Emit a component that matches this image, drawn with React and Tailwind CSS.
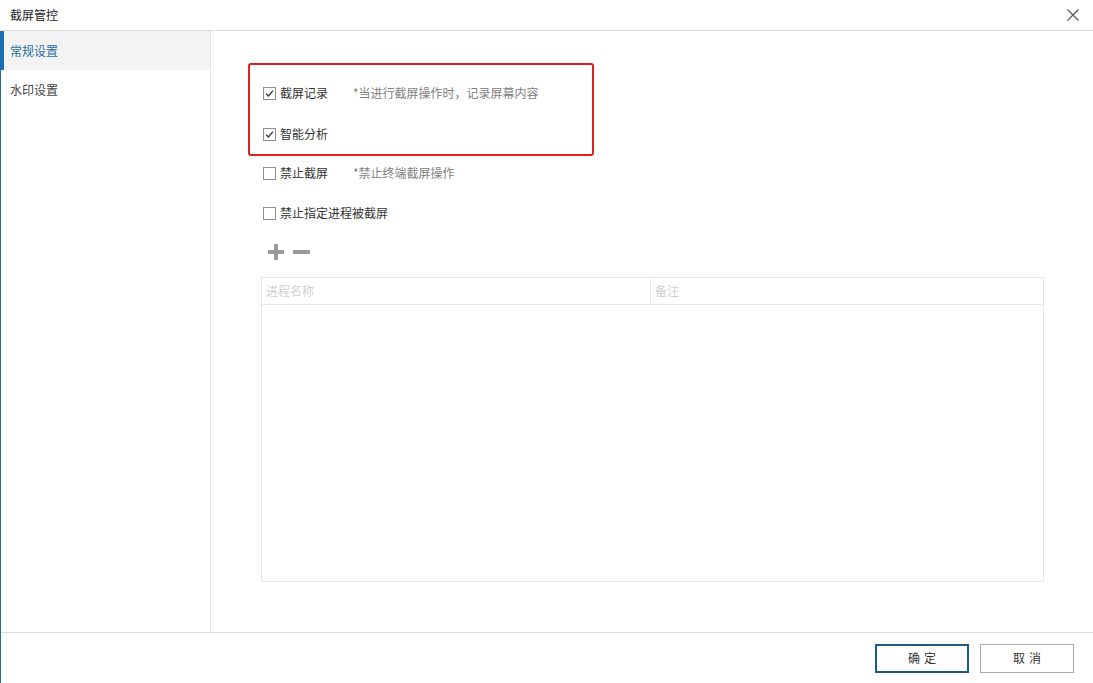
import React from 'react'

const font = { fontFamily: '"Microsoft YaHei", "Noto Sans CJK SC", "Noto Sans", sans-serif' }

const Checkbox = ({ checked }) => (
  <span className="w-[13px] h-[13px] border border-[#8f8f8f] bg-white flex items-center justify-center shrink-0">
    {checked && (
      <svg width="9" height="9" viewBox="0 0 9 9" fill="none">
        <path d="M1 4.6 L3.4 7 L8 1.6" stroke="#333" strokeWidth="1.3" />
      </svg>
    )}
  </span>
)

const Row = ({ checked, label, hint, className = '' }) => (
  <div className={`h-[20px] flex items-center ${className}`}>
    <Checkbox checked={checked} />
    <span className="ml-[4px] w-[73px] text-[12px] text-[#333] whitespace-nowrap">{label}</span>
    {hint && <span className="text-[12px] text-[#808080] whitespace-nowrap">{hint}</span>}
  </div>
)

export default function App() {
  return (
    <div className="w-[1093px] h-[683px] bg-white flex flex-col overflow-hidden" style={font}>
      {/* title bar */}
      <div className="h-[31px] shrink-0 flex items-center justify-between border-b border-[#dedede] pl-[10px] pr-[14px]">
        <span className="text-[12px] text-[#222]">截屏管控</span>
        <svg width="12" height="12" viewBox="0 0 12 12">
          <path d="M0.5 0.5 L11.5 11.5 M11.5 0.5 L0.5 11.5" stroke="#555" strokeWidth="1.2" />
        </svg>
      </div>

      <div className="flex-1 flex flex-col border-l border-[#2b6a92]">
        <div className="flex-1 flex">
          {/* sidebar */}
          <div className="w-[210px] shrink-0 border-r border-[#e2e2e2] flex flex-col">
            <div className="h-[39px] flex items-center bg-[#f3f3f3] relative -ml-px pl-[10px]">
              <span className="absolute left-0 top-0 bottom-0 w-[4px] bg-[#1b6db3]" />
              <span className="text-[12px] text-[#2a6ea6]">常规设置</span>
            </div>
            <div className="h-[39px] flex items-center pl-[9px]">
              <span className="text-[12px] text-[#444]">水印设置</span>
            </div>
          </div>

          {/* content */}
          <div className="flex-1 flex flex-col pl-[37px] pr-[49px] pt-[32px]">
            <div className="w-[346px] h-[93px] border-2 border-[#e0201e] rounded-[3px] pl-[13px] pt-[18px] flex flex-col gap-[21px]">
              <Row checked label="截屏记录" hint="*当进行截屏操作时，记录屏幕内容" />
              <Row checked label="智能分析" />
            </div>
            <div className="pl-[15px] mt-[7px] flex flex-col gap-[20px]">
              <Row label="禁止截屏" hint="*禁止终端截屏操作" />
              <Row label="禁止指定进程被截屏" />
            </div>
            <div className="pl-[20px] mt-[21px] flex items-center gap-[9px] h-[16px]">
              <svg width="16" height="16" viewBox="0 0 16 16">
                <path d="M0 6h16v4H0z M6 0h4v16H6z" fill="#9a9a9a" />
              </svg>
              <svg width="17" height="16" viewBox="0 0 17 16">
                <path d="M0 6h17v4H0z" fill="#9a9a9a" />
              </svg>
            </div>
            <div className="ml-[13px] mt-[17px] h-[305px] border border-[#e6e6e6] flex flex-col">
              <div className="h-[27px] border-b border-[#e6e6e6] flex text-[12px] text-[#cfcfcf]">
                <div className="w-[389px] border-r border-[#e6e6e6] flex items-center pl-[4px]">进程名称</div>
                <div className="flex-1 flex items-center pl-[4px]">备注</div>
              </div>
            </div>
          </div>
        </div>

        {/* footer */}
        <div className="h-[51px] shrink-0 border-t border-[#dcdcdc] flex items-center justify-end pr-[19px] gap-[11px]">
          <button className="w-[94px] h-[29px] border-2 border-[#1d5b87] bg-white text-[12px] text-[#333] tracking-[4px] pl-[4px]">
            确定
          </button>
          <button className="w-[94px] h-[29px] border border-[#ababab] bg-white text-[12px] text-[#333] tracking-[4px] pl-[4px]">
            取消
          </button>
        </div>
      </div>
    </div>
  )
}
